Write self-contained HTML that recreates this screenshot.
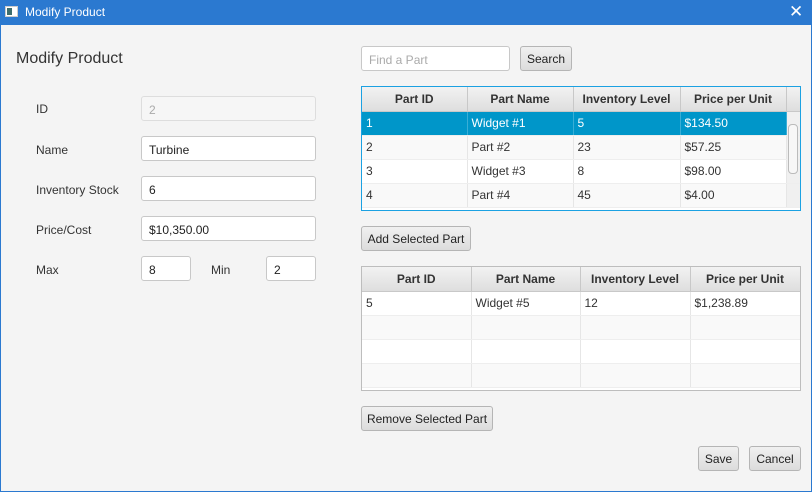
<!DOCTYPE html><html><head><style>
*{box-sizing:border-box;margin:0;padding:0}
body{width:812px;height:492px;background:#f4f4f4;font-family:"Liberation Sans",sans-serif;font-size:12px;color:#333;position:relative;overflow:hidden}
.a{position:absolute}
.tb{left:0;top:0;width:812px;height:25px;background:#2b79d0;color:#fff;font-size:12px}
.in{position:absolute;height:25px;background:#fff;border:1px solid #c8c8c8;border-radius:3px;padding:6px 7px 4px;font-size:12px;color:#222}
.btn{position:absolute;height:25px;border:1px solid #b5b5b5;border-radius:3px;background:linear-gradient(#f0f0f0,#dcdcdc);font-size:12px;text-align:center;line-height:24px;color:#222}
.lbl{position:absolute;left:36px;font-size:12px;color:#333}
table{border-collapse:collapse;table-layout:fixed;font-size:12px}
th{height:24px;background:linear-gradient(#f2f2f2,#dedede);border-right:1px solid #c8c8c8;border-bottom:1px solid #c8c8c8;font-weight:bold;color:#333}
td{height:24px;border-right:1px solid #e6e6e6;border-bottom:1px solid #eee;padding-left:4px;background:#fff}
tr.o td{background:#f9f9f9}
tr.s td{background:#0096c9;color:#fff;border-right-color:#3aaed6}
</style></head><body>
<div class="a" style="left:0;top:0;width:812px;height:492px;border:1px solid #2b79d0"></div>
<div class="a tb"><div class="a" style="left:5px;top:6px;width:13px;height:11px;background:#fff;border:1px solid #ccc"><div class="a" style="left:1px;top:1px;width:5px;height:7px;background:#3d6d6d"></div></div><span class="a" style="left:25px;top:5px">Modify Product</span><span class="a" style="left:789px;top:2px;font-size:17px">✕</span></div>
<div class="a" style="left:16px;top:50px;font-size:16px;color:#333">Modify Product</div>
<div class="lbl" style="top:102px">ID</div><div class="in" style="left:141px;top:96px;width:175px;background:#f6f6f6;color:#aaa;border-color:#ddd">2</div>
<div class="lbl" style="top:143px">Name</div><div class="in" style="left:141px;top:136px;width:175px">Turbine</div>
<div class="lbl" style="top:183px">Inventory Stock</div><div class="in" style="left:141px;top:176px;width:175px">6</div>
<div class="lbl" style="top:223px">Price/Cost</div><div class="in" style="left:141px;top:216px;width:175px">$10,350.00</div>
<div class="lbl" style="top:263px">Max</div><div class="in" style="left:141px;top:256px;width:50px">8</div>
<div class="lbl" style="left:211px;top:263px">Min</div><div class="in" style="left:266px;top:256px;width:50px">2</div>
<div class="in" style="left:361px;top:46px;width:149px;color:#aaa">Find a Part</div>
<div class="btn" style="left:520px;top:46px;width:52px">Search</div>
<div class="a" style="left:361px;top:86px;width:440px;height:125px;border:1px solid #1ba1e2;background:#fff;overflow:hidden">
<table style="width:438px"><colgroup><col style="width:105px"><col style="width:106px"><col style="width:107px"><col style="width:106px"><col style="width:14px"></colgroup>
<tr><th>Part ID</th><th>Part Name</th><th>Inventory Level</th><th>Price per Unit</th><th></th></tr>
<tr class="s"><td>1</td><td>Widget #1</td><td>5</td><td>$134.50</td><td style="background:#f0f0f0"></td></tr>
<tr class="o"><td>2</td><td>Part #2</td><td>23</td><td>$57.25</td><td style="background:#f0f0f0"></td></tr>
<tr><td>3</td><td>Widget #3</td><td>8</td><td>$98.00</td><td style="background:#f0f0f0"></td></tr>
<tr class="o"><td>4</td><td>Part #4</td><td>45</td><td>$4.00</td><td style="background:#f0f0f0"></td></tr>
</table>
<div class="a" style="left:426px;top:37px;width:10px;height:50px;border:1px solid #bbb;border-radius:4px;background:#f7f7f7"></div>
</div>
<div class="btn" style="left:361px;top:226px;width:110px">Add Selected Part</div>
<div class="a" style="left:361px;top:266px;width:440px;height:125px;border:1px solid #bdbdbd;background:#fff;overflow:hidden">
<table style="width:438px"><colgroup><col style="width:109px"><col style="width:109px"><col style="width:110px"><col style="width:110px"></colgroup>
<tr><th>Part ID</th><th>Part Name</th><th>Inventory Level</th><th>Price per Unit</th></tr>
<tr><td>5</td><td>Widget #5</td><td>12</td><td>$1,238.89</td></tr>
<tr class="o"><td></td><td></td><td></td><td></td></tr>
<tr><td></td><td></td><td></td><td></td></tr>
<tr class="o"><td></td><td></td><td></td><td></td></tr>
</table></div>
<div class="btn" style="left:361px;top:406px;width:132px">Remove Selected Part</div>
<div class="btn" style="left:698px;top:446px;width:41px">Save</div>
<div class="btn" style="left:749px;top:446px;width:52px">Cancel</div>
</body></html>
